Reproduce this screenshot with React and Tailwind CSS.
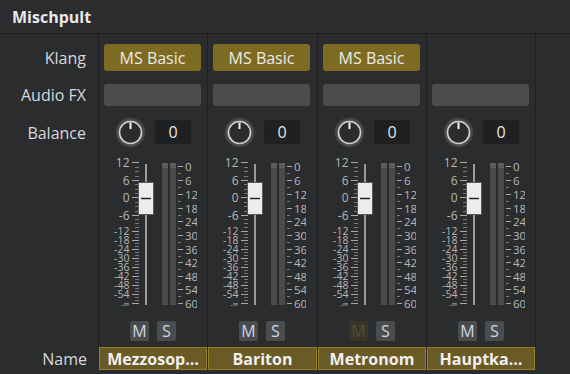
const strips = [
  { name: 'Mezzosop…', sound: 'MS Basic', muteOff: false, w: 'w-[109px]', nw: 'w-[108px]' },
  { name: 'Bariton', sound: 'MS Basic', muteOff: false, w: 'w-[110px]', nw: 'w-[109px]' },
  { name: 'Metronom', sound: 'MS Basic', muteOff: true, w: 'w-[109px]', nw: 'w-[108px]' },
  { name: 'Hauptka…', sound: null, muteOff: false, w: 'w-[109px]', nw: 'w-[108px]' },
];

const leftMarks = [
  ['12', 8], ['6', 26], ['0', 43], ['-6', 61], ['-12', 77], ['-18', 86], ['-24', 95],
  ['-30', 104], ['-36', 113], ['-42', 122], ['-48', 131], ['-54', 140], ['-∞', 149],
];

const rightMarks = [
  ['0', 12], ['6', 26], ['12', 40], ['18', 54], ['24', 67], ['30', 81],
  ['36', 95], ['42', 108], ['48', 122], ['54', 135], ['60', 149],
];

function Knob() {
  return (
    <svg width="31" height="31" viewBox="0 0 31 31">
      <defs>
        <radialGradient id="halo" cx="50%" cy="50%" r="50%">
          <stop offset="70%" stopColor="#5e5f61" />
          <stop offset="100%" stopColor="#3a3b3d" />
        </radialGradient>
      </defs>
      <circle cx="15.5" cy="15.5" r="15" fill="url(#halo)" />
      <circle cx="15.5" cy="15.5" r="11" fill="#2b2c2e" stroke="#cfcfcf" strokeWidth="1.6" />
      <line x1="15.5" y1="5.5" x2="15.5" y2="12" stroke="#f2f2f2" strokeWidth="2" />
    </svg>
  );
}

function Fader() {
  const minorLeft = [];
  for (let i = 0; i < leftMarks.length - 1; i++) {
    const a = leftMarks[i][1];
    const b = leftMarks[i + 1][1];
    const n = b - a > 12 ? 4 : 3;
    for (let k = 1; k < n; k++) minorLeft.push(a + ((b - a) * k) / n);
  }
  const minorRight = [];
  for (let i = 0; i < rightMarks.length - 1; i++) {
    minorRight.push((rightMarks[i][1] + rightMarks[i + 1][1]) / 2);
  }
  return (
    <svg width="108" height="157" viewBox="0 0 108 157" style={{ fontFamily: '"Open Sans", sans-serif' }}>
      <defs>
        <clipPath id="rightClip">
          <rect x="0" y="0" width="98" height="157" />
        </clipPath>
      </defs>
      {leftMarks.map(([t, y], i) => (
        <g key={t}>
          <line x1="33" y1={y + 0.5} x2="40" y2={y + 0.5} stroke="#a8a8a8" strokeWidth="1" />
          <text
            x="30.5"
            y={y + (i < 4 ? 4.5 : 3.5)}
            textAnchor="end"
            fontSize={i < 4 ? 12 : i === 12 ? 8 : 10.5}
            fill="#b8b8b8"
          >
            {t}
          </text>
        </g>
      ))}
      {minorLeft.map((y, i) => (
        <line key={i} x1="36" y1={Math.round(y) + 0.5} x2="40" y2={Math.round(y) + 0.5} stroke="#7a7a7a" strokeWidth="1" />
      ))}
      <rect x="46" y="10" width="2" height="141" fill="#9a9a9a" />
      <rect x="39.5" y="28.5" width="15" height="32" rx="1" fill="#ececec" stroke="#5a5a5a" />
      <line x1="42" y1="44.5" x2="52" y2="44.5" stroke="#1a1a1a" strokeWidth="1.4" />
      <rect x="63" y="9" width="6" height="142" fill="#4a4b4d" />
      <rect x="71" y="9" width="6" height="142" fill="#4a4b4d" />
      <rect x="63" y="9" width="6" height="5" fill="#5c5d5f" />
      <rect x="71" y="9" width="6" height="5" fill="#5c5d5f" />
      <g clipPath="url(#rightClip)">
        {rightMarks.map(([t, y]) => (
          <g key={t}>
            <line x1="79" y1={y + 0.5} x2="84" y2={y + 0.5} stroke="#a8a8a8" strokeWidth="1" />
            <text x="86" y={y + 4.5} fontSize="11.5" fill="#b8b8b8">
              {t}
            </text>
          </g>
        ))}
        {minorRight.map((y, i) => (
          <line key={i} x1="79" y1={Math.round(y) + 0.5} x2="82" y2={Math.round(y) + 0.5} stroke="#7a7a7a" strokeWidth="1" />
        ))}
      </g>
    </svg>
  );
}

function Strip({ strip }) {
  return (
    <div className={`${strip.w} border-r border-[#1f2022] flex flex-col pt-[10px] pb-[6px]`}>
      <div className="h-[27px] px-[5px]">
        {strip.sound && (
          <div className="h-full w-[97px] rounded-[3px] bg-[#7d6b22] flex items-center justify-center text-[16px] text-[#ebebeb]">
            {strip.sound}
          </div>
        )}
      </div>
      <div className="mt-[13px] h-[22px] px-[5px]">
        <div className="h-full w-[97px] rounded-[3px] bg-[#4b4c4e]" />
      </div>
      <div className="mt-[11px] h-[31px] flex items-center pl-[16px]">
        <Knob />
        <div className="ml-[9px] -mt-[2px] w-[36px] h-[24px] rounded-[2px] bg-[#1f2022] flex items-center justify-center text-[16px] text-[#e6e6e6]">
          0
        </div>
      </div>
      <div className="mt-[6px] h-[157px]">
        <Fader />
      </div>
      <div className="mt-[10px] h-[20px] flex gap-[8px] pl-[31px]">
        <div
          className={
            strip.muteOff
              ? 'w-[19px] h-[20px] rounded-[2px] bg-[#3a3627] flex items-center justify-center text-[16px] text-[#544e38]'
              : 'w-[19px] h-[20px] rounded-[2px] bg-[#4b4c4e] flex items-center justify-center text-[16px] text-[#cdd8e4]'
          }
        >
          M
        </div>
        <div className="w-[19px] h-[20px] rounded-[2px] bg-[#4b4c4e] flex items-center justify-center text-[16px] text-[#cdd8e4]">
          S
        </div>
      </div>
    </div>
  );
}

export default function App() {
  return (
    <div
      className="w-[570px] h-[374px] overflow-hidden bg-[#2b2c2e] text-[#d6d9dd]"
      style={{ fontFamily: '"Open Sans", "Noto Sans", sans-serif' }}
    >
      <div className="h-[34px] border-b border-[#1f2022] flex items-center pl-[12px] text-[16px] font-bold text-[#e8e8e8]">
        Mischpult
      </div>
      <div className="flex">
        <div className="w-[99px] border-r border-[#1f2022] flex flex-col items-end pr-[12px] pt-[10px] text-[16px]">
          <div className="h-[27px] flex items-center">Klang</div>
          <div className="mt-[13px] h-[22px] flex items-center">Audio FX</div>
          <div className="mt-[11px] h-[31px] flex items-center">Balance</div>
        </div>
        {strips.map((s) => (
          <Strip key={s.name} strip={s} />
        ))}
      </div>
      <div className="flex h-[23px]">
        <div className="w-[99px] pr-[12px] flex items-center justify-end text-[16px]">Name</div>
        {strips.map((s) => (
          <div
            key={s.name}
            className={`${s.nw} mr-[1px] border border-[#957f2a] bg-[#6a5a26] flex items-center justify-center text-[16px] font-bold text-[#f0f0f0]`}
          >
            {s.name}
          </div>
        ))}
      </div>
    </div>
  );
}
